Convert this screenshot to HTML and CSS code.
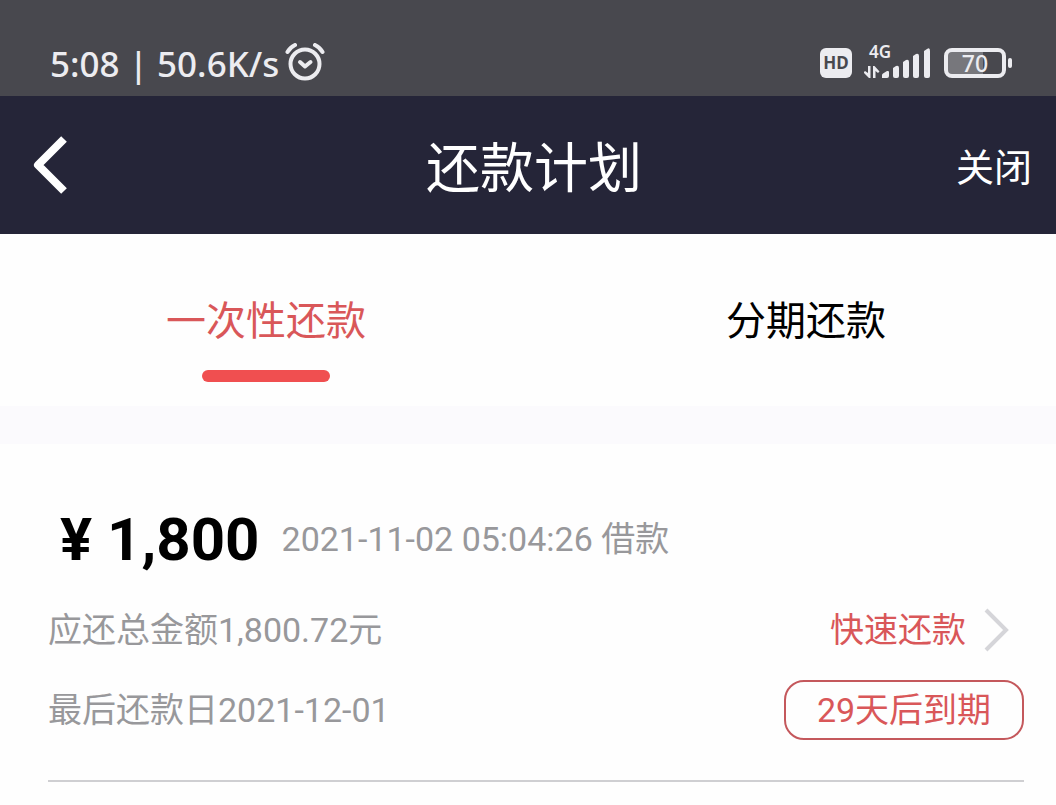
FILE: index.html
```html
<!DOCTYPE html>
<html lang="zh-CN">
    <head>
        <meta charset="UTF-8">
        <meta name="viewport" content="width=device-width, initial-scale=1.0">
        <title>还款计划</title>
        <link rel="stylesheet" href="styles.css">
    </head>
    <body>
        <div class="statusbar">
            <div class="statusleft">
                <span>5:08 | 50.6K/s</span>
                <svg class="alarm" viewBox="0 0 40 40" width="40" height="40" fill="none" stroke="#ececf0" stroke-linecap="round" stroke-linejoin="round">
                    <circle cx="20" cy="21" r="14.500" stroke-width="4"/>
                    <path d="M2.500 9Q5 4.500 10 2M30 2Q35 4.500 37.500 9" stroke-width="4"/>
                    <path d="M15 19L20 23.500L25.500 19" stroke-width="4"/>
                </svg>
            </div>
            <div class="statusright">
                <span class="hd">HD</span>
                <div class="network">
                    <span class="nettype">4G</span>
                    <svg viewBox="0 0 68 34" width="68" height="34" fill="#ececf0">
                        <path d="M4 20H6.500V32H5L-0.500 26.500L1 25L4 27ZM9 32V20H10.500L15.500 25.500L14 27L11.500 25V32Z"/>
                        <path d="M18 32V29Q18 28 19 27.500L23 25Q25 24.500 25 26V30Q25 32 23 32Z"/>
                        <path d="M29 22L32 20Q35 19 35 22V30Q35 32 33 32H31Q29 32 29 30Z"/>
                        <path d="M39 16L42 14Q45 13 45 16V30Q45 32 43 32H41Q39 32 39 30Z"/>
                        <path d="M49 10L52 8Q55 7 55 10V30Q55 32 53 32H51Q49 32 49 30Z"/>
                        <path d="M60 5L63 3Q66 1 66 5V30Q66 32 64 32H62Q60 32 60 30Z"/>
                    </svg>
                </div>
                <div class="battery"><span>70</span></div>
            </div>
        </div>

        <header class="header">
            <button class="backbutton" aria-label="返回">
                <svg viewBox="0 0 36 60" width="36" height="60" fill="none" stroke="#fff" stroke-width="8" stroke-linejoin="round">
                    <path d="M32 4L6 30L32 56"/>
                </svg>
            </button>
            <h1>还款计划</h1>
            <button class="closebutton">关闭</button>
        </header>

        <nav class="tabs">
            <button class="tab active">一次性还款</button>
            <button class="tab">分期还款</button>
        </nav>

        <main class="plan">
            <div class="loan">
                <span class="amount">¥ 1,800</span>
                <span class="text">2021-11-02 05:04:26 借款</span>
            </div>
            <div class="row">
                <span class="text">应还总金额1,800.72元</span>
                <a class="quickpay" href="#">
                    <span class="text">快速还款</span>
                    <svg viewBox="0 0 26 44" width="26" height="44" fill="none" stroke="#d5d5d9" stroke-width="4">
                        <path d="M2 2L22 22L2 42"/>
                    </svg>
                </a>
            </div>
            <div class="row">
                <span class="text">最后还款日2021-12-01</span>
                <button class="duebutton">29天后到期</button>
            </div>
        </main>
    </body>
</html>
```

FILE: styles.css
```css
*{
    box-sizing: border-box;
}
body{
    margin: 0;
    background-color: #fefefe;
    font-family: Roboto, "Noto Sans CJK SC", sans-serif;
}
button{
    padding: 0;
    border: none;
    background: none;
    font-family: inherit;
    cursor: pointer;
}
svg{
    display: block;
}

.statusbar{
    display: flex;
    justify-content: space-between;
    align-items: center;
    height: 96px;
    padding: 30px 50px 0 50px;
    background-color: #48484e;
    color: #ececf0;
    font-family: "Noto Sans", sans-serif;
    font-weight: 500;
}
.statusleft, .statusright{
    display: flex;
    align-items: center;
}
.statusleft{
    gap: 6px;
    font-size: 35px;
}
.statusright{
    gap: 12px;
}
.hd{
    width: 32px;
    height: 30px;
    border-radius: 6px;
    background-color: #ececf0;
    color: #48484e;
    font-size: 17px;
    font-weight: 700;
    line-height: 30px;
    text-align: center;
}
.network{
    position: relative;
}
.nettype{
    position: absolute;
    top: -4px;
    left: 5px;
    font-size: 17px;
    font-weight: 600;
    line-height: 20px;
}
.battery{
    position: relative;
    width: 62px;
    height: 30px;
    border: 4px solid #ececf0;
    border-radius: 8px;
    background: linear-gradient(to right, #77777c 65%, #48484e 65%);
    font-size: 23px;
    line-height: 22px;
    text-align: center;
}
.battery::after{
    content: "";
    position: absolute;
    top: 6px;
    right: -10px;
    width: 4px;
    height: 10px;
    border-radius: 2px;
    background-color: #ececf0;
}

.header{
    display: grid;
    grid-template-columns: 1fr auto 1fr;
    align-items: center;
    height: 138px;
    padding: 0 24px 0 32px;
    background-color: #252538;
    color: #fff;
}
.header h1{
    margin: 0;
    padding: 0 0 2px 4px;
    font-size: 54px;
    font-weight: 400;
}
.backbutton{
    justify-self: start;
}
.closebutton{
    justify-self: end;
    padding-bottom: 2px;
    color: #fff;
    font-size: 38px;
}

.tabs{
    display: flex;
    justify-content: space-between;
    padding: 58px 170px 24px 166px;
    border-bottom: 38px solid #fbfafd;
}
.tab{
    display: flex;
    flex-direction: column;
    align-items: center;
    gap: 18px;
    color: #000;
    font-size: 40px;
    line-height: 60px;
}
.tab.active{
    color: #d95759;
}
.tab.active::after{
    content: "";
    width: 128px;
    height: 12px;
    border-radius: 6px;
    background-color: #f04f50;
}

.plan{
    margin: 0 32px 0 48px;
    padding: 60px 0 40px;
    border-bottom: 2px solid #cfcfd2;
    color: #98989b;
    font-size: 34px;
}
.text{
    padding-bottom: 6px;
}
.loan{
    display: flex;
    align-items: center;
    gap: 22px;
    height: 70px;
    margin-bottom: 26px;
    padding-left: 12px;
}
.amount{
    color: #000;
    font-size: 60px;
    font-weight: 700;
}
.row{
    display: flex;
    justify-content: space-between;
    align-items: center;
    height: 60px;
    margin-top: 20px;
}
.quickpay{
    display: flex;
    align-items: center;
    gap: 18px;
    margin-right: 14px;
    color: #d95759;
    text-decoration: none;
}
.duebutton{
    width: 240px;
    height: 60px;
    padding-bottom: 6px;
    border: 2px solid #c4585c;
    border-radius: 20px;
    color: #d95759;
    font-size: 34px;
}
```
